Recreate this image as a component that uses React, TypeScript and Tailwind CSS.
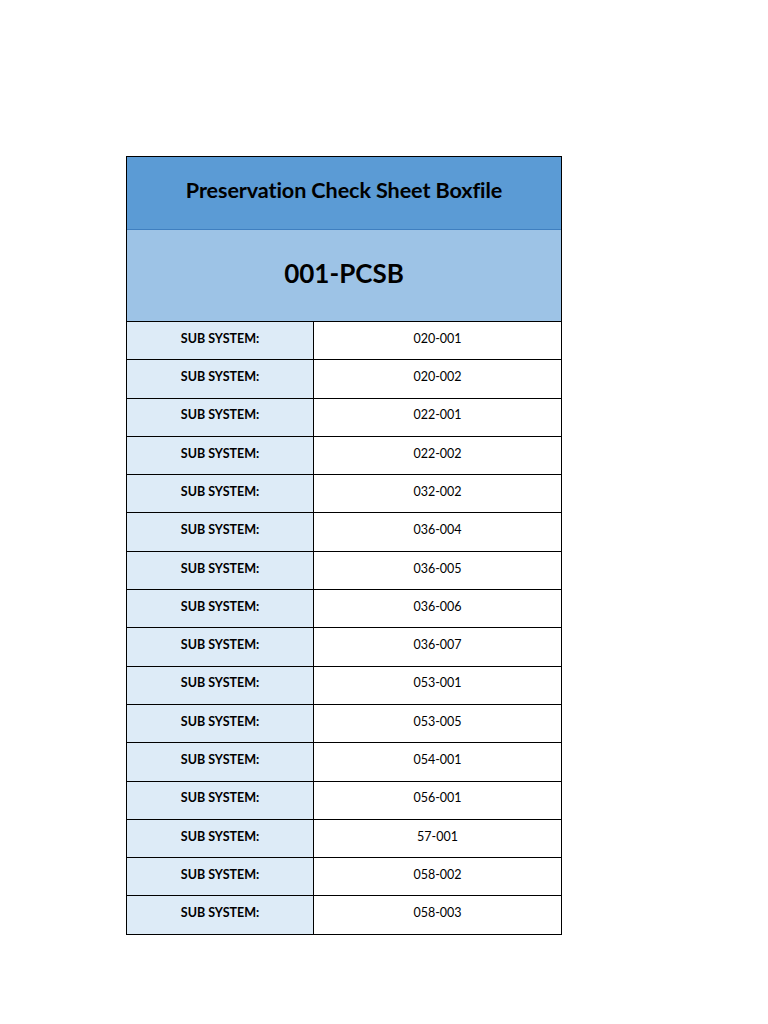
const subSystems = [
  "020-001",
  "020-002",
  "022-001",
  "022-002",
  "032-002",
  "036-004",
  "036-005",
  "036-006",
  "036-007",
  "053-001",
  "053-005",
  "054-001",
  "056-001",
  "57-001",
  "058-002",
  "058-003",
];

export default function App() {
  return (
    <div
      className="min-h-[1024px] w-[768px] bg-white pl-[126px] pt-[156px] text-black"
      style={{ fontFamily: "Lato, 'Open Sans', sans-serif" }}
    >
      <div className="w-[436px] border border-black">
        <div className="flex h-[73px] items-center justify-center border-b border-[#3f7fc0] bg-[#5b9bd5] pb-[5px]">
          <h1 className="text-[21.6px] font-bold tracking-[-0.1px]">Preservation Check Sheet Boxfile</h1>
        </div>
        <div className="flex h-[91px] items-center justify-center bg-[#9dc3e6] pb-[5px]">
          <h2 className="text-[26px] font-bold">001-PCSB</h2>
        </div>
        {subSystems.map((code) => (
          <div key={code} className="flex h-[38.3px] border-t border-black">
            <div className="flex w-[187px] items-center justify-center border-r border-black bg-[#ddebf7] pb-[3px] text-[12.5px] font-bold">
              SUB SYSTEM:
            </div>
            <div className="flex flex-1 items-center justify-center bg-white pb-[3px] text-[12.5px]">
              {code}
            </div>
          </div>
        ))}
      </div>
    </div>
  );
}
